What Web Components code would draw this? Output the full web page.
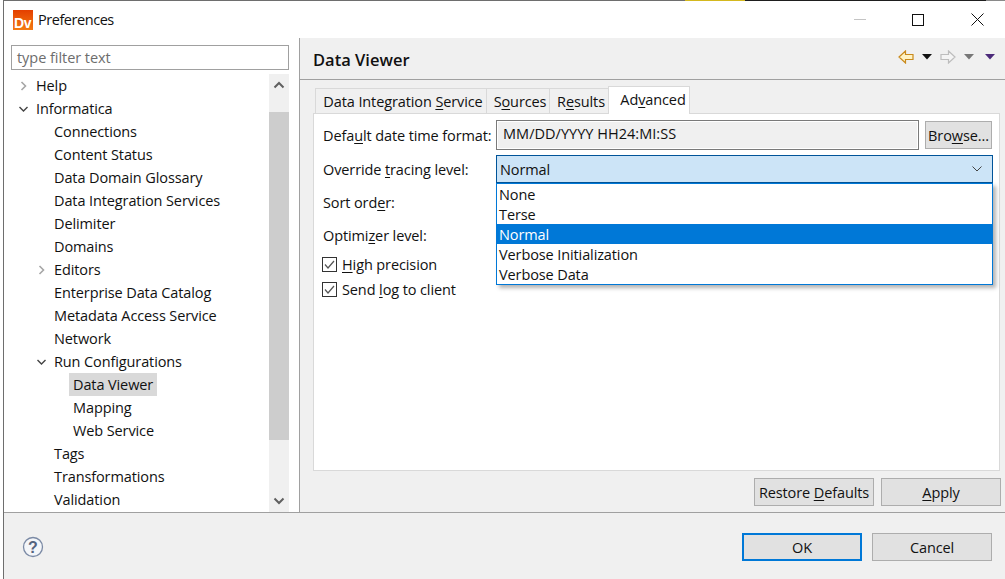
<!DOCTYPE html>
<html>
<head>
<meta charset="utf-8">
<title>Preferences</title>
<style>
  html, body { margin: 0; height: 100%; background: #fff; }
  body { overflow: hidden; }
</style>
</head>
<body>
<pref-window></pref-window>

<script>
const FONT = '"Open Sans", "Noto Sans", sans-serif';

customElements.define('pref-button', class extends HTMLElement {
  constructor() {
    super();
    this.attachShadow({ mode: 'open' });
    this.shadowRoot.innerHTML = `
      <style>
        :host {
          display: flex;
          align-items: center;
          justify-content: center;
          box-sizing: border-box;
          height: 28px;
          background: #e1e1e1;
          border: 1px solid #adadad;
          color: #111;
          font-size: 14.5px;
          letter-spacing: -.11px;
          white-space: nowrap;
        }
        :host([default]) { border: 2px solid #0078d7; }
      </style>
      <span><slot></slot></span>`;
  }
});

customElements.define('tree-row', class extends HTMLElement {
  constructor() {
    super();
    this.attachShadow({ mode: 'open' });
    this.shadowRoot.innerHTML = `
      <style>
        :host {
          display: flex;
          align-items: center;
          height: 23px;
          color: #111;
          font-size: 14.5px;
          letter-spacing: -.11px;
          white-space: nowrap;
        }
        .twist { flex: 0 0 15px; height: 12px; margin-left: 7px; }
        :host([level="1"]) .twist { margin-left: 25px; }
        :host([level="2"]) .twist { margin-left: 44px; }
        .label { padding: 0 4px; margin-left: -1px; height: 23px; line-height: 23px; }
        :host([selected]) .label { background: #d9d9d9; }
        svg { display: block; }
      </style>
      <div class="twist"></div>
      <div class="label"><slot></slot></div>`;
    const twist = this.shadowRoot.querySelector('.twist');
    const state = this.getAttribute('twist');
    if (state === 'closed') {
      twist.innerHTML = '<svg width="12" height="12"><path d="M3.5 2 7.5 6 3.5 10" fill="none" stroke="#a6a6a6" stroke-width="1.6"/></svg>';
    } else if (state === 'open') {
      twist.innerHTML = '<svg width="12" height="12"><path d="M1.5 4 5.5 8 9.5 4" fill="none" stroke="#444" stroke-width="1.4"/></svg>';
    }
  }
});

customElements.define('pref-tree', class extends HTMLElement {
  constructor() {
    super();
    this.attachShadow({ mode: 'open' });
    this.shadowRoot.innerHTML = `
      <style>
        :host {
          display: flex;
          flex: 1;
          min-height: 0;
          overflow: hidden;
        }
        .rows { flex: 1; overflow: hidden; }
        .bar {
          flex: 0 0 20px;
          display: flex;
          flex-direction: column;
          background: #f0f0f0;
        }
        .end { flex: 0 0 38px; display: flex; align-items: center; justify-content: center; }
        .up svg { margin-top: -16px; }
        .down { flex-basis: 72px; align-items: flex-end; padding-bottom: 7px; box-sizing: border-box; }
        .thumb { flex: 1; background: #cdcdcd; }
        svg { display: block; }
      </style>
      <div class="rows"><slot></slot></div>
      <div class="bar">
        <div class="end up"><svg width="12" height="8"><path d="M1.5 6.500 6 2 10.500 6.500" fill="none" stroke="#606060" stroke-width="2"/></svg></div>
        <div class="thumb"></div>
        <div class="end down"><svg width="12" height="8"><path d="M1.500 1.500 6 6 10.500 1.500" fill="none" stroke="#606060" stroke-width="2"/></svg></div>
      </div>`;
  }
});

customElements.define('pref-tabs', class extends HTMLElement {
  constructor() {
    super();
    this.attachShadow({ mode: 'open' });
    this.shadowRoot.innerHTML = `
      <style>
        :host {
          display: flex;
          flex: 0 0 27px;
          align-items: flex-end;
          height: 27px;
          margin-left: 2px;
          font-size: 14.5px;
          letter-spacing: -.11px;
          color: #111;
          position: relative;
          z-index: 1;
        }
        ::slotted(span) {
          display: block;
          box-sizing: border-box;
          height: 25px;
          line-height: 26px;
          padding-left: 4px;
          background: #f0f0f0;
          border: 1px solid #d9d9d9;
          border-bottom: 0;
          margin-right: -1px;
          text-align: center;
          white-space: nowrap;
        }
        ::slotted(span[active]) {
          height: 28px;
          line-height: 26px;
          padding-left: 8px;
          background: #fff;
          margin-bottom: -1px;
        }
      </style>
      <slot></slot>`;
  }
});

customElements.define('advanced-form', class extends HTMLElement {
  constructor() {
    super();
    this.attachShadow({ mode: 'open' });
    this.shadowRoot.innerHTML = `
      <style>
        :host {
          display: block;
          flex: 1;
          box-sizing: border-box;
          background: #fff;
          border: 1px solid #d9d9d9;
          margin-right: 5px;
          padding: 6px 0 0 8px;
          font-size: 14.5px;
          letter-spacing: -.11px;
          color: #111;
          position: relative;
        }
        u { text-underline-offset: 2px; }
        .row { display: flex; align-items: center; }
        .label { flex: 0 0 174px; box-sizing: border-box; padding-left: 1px; white-space: nowrap; }
        .date { height: 30px; }
        .value {
          flex: 0 0 423px;
          box-sizing: border-box;
          height: 30px;
          line-height: 25px;
          padding-left: 6px;
          letter-spacing: .03px;
          background: #f0f0f0;
          border: 1px solid #7a7a7a;
          outline: 1px solid #fff;
          outline-offset: -2px;
        }
        pref-button { width: 67px; height: 28px; margin-left: 6px; }
        .combo-row { height: 28px; margin-top: 5px; }
        .combo {
          flex: 0 0 497px;
          display: flex;
          align-items: center;
          justify-content: space-between;
          box-sizing: border-box;
          height: 28px;
          padding: 0 10px 0 3px;
          background: #cce4f7;
          border: 1px solid #005499;
        }
        .plain { height: 33px; }
        .sort { margin-top: 3px; }
        .check { height: 25px; gap: 5px; }
        .box {
          flex: 0 0 15px;
          height: 15px;
          box-sizing: border-box;
          border: 1px solid #333;
          background: #fff;
        }
        .box svg { display: block; }
        .list {
          position: absolute;
          left: 182px;
          top: 69px;
          width: 497px;
          box-sizing: border-box;
          background: #fff;
          border: 1px solid #0078d7;
          box-shadow: 3px 3px 4px rgba(0,0,0,.3);
          z-index: 2;
        }
        .list div { height: 20px; line-height: 22px; padding-left: 2px; }
        .list .on { background: #0078d7; color: #fff; }
      </style>
      <div class="row date">
        <div class="label">Defa<u>u</u>lt date time format:</div>
        <div class="value">MM/DD/YYYY HH24:MI:SS</div>
        <pref-button>Bro<u>w</u>se...</pref-button>
      </div>
      <div class="row combo-row">
        <div class="label">Override <u>t</u>racing level:</div>
        <div class="combo">
          <span>Normal</span>
          <svg width="10" height="6"><path d="M.5.5 5 5 9.500.5" fill="none" stroke="#444"/></svg>
        </div>
      </div>
      <div class="row plain sort"><div class="label">Sort ord<u>e</u>r:</div></div>
      <div class="row plain"><div class="label">Optimi<u>z</u>er level:</div></div>
      <div class="row check">
        <div class="box"><svg width="13" height="13"><path d="M2 6.500 5 10 11 3" fill="none" stroke="#555" stroke-width="1.200"/></svg></div>
        <div><u>H</u>igh precision</div>
      </div>
      <div class="row check">
        <div class="box"><svg width="13" height="13"><path d="M2 6.500 5 10 11 3" fill="none" stroke="#555" stroke-width="1.200"/></svg></div>
        <div>Send <u>l</u>og to client</div>
      </div>
      <div class="list">
        <div>None</div>
        <div>Terse</div>
        <div class="on">Normal</div>
        <div>Verbose Initialization</div>
        <div>Verbose Data</div>
      </div>`;
  }
});

customElements.define('pref-window', class extends HTMLElement {
  constructor() {
    super();
    this.attachShadow({ mode: 'open' });
    this.shadowRoot.innerHTML = `
      <style>
        :host {
          display: flex;
          flex-direction: column;
          box-sizing: border-box;
          height: 579px;
          width: 1002px;
          margin-left: 3px;
          border-left: 1px solid #808080;
          border-top: 1px solid;
          border-image: linear-gradient(90deg, #6e6e6e 681px, #d4b81e 681px, #d4b81e 741px, #1e1e1e 741px, #1e1e1e 982px, #8a8a8a 982px) 1;
          background: #f0f0f0;
          color: #111;
          font-family: ${FONT};
        }
        svg { display: block; }
        u { text-underline-offset: 2px; }
        .title {
          flex: 0 0 37px;
          display: flex;
          align-items: center;
          background: #fff;
          font-size: 14.5px;
          letter-spacing: -.45px;
        }
        .logo { margin: 0 5px 0 9px; }
        .name { flex: 1; margin-top: -1px; }
        .caps { display: flex; align-items: center; }
        .caps div { width: 58px; display: flex; justify-content: center; }
        .caps .max { margin-right: 2px; }
        .caps .close { width: 56px; }
        .main { flex: 1; display: flex; min-height: 0; background: #f0f0f0; }
        .left {
          flex: 0 0 296px;
          box-sizing: border-box;
          display: flex;
          flex-direction: column;
          background: #fff;
          border-right: 1px solid #a0a0a0;
          padding: 7px 10px 0 7px;
        }
        .filter {
          flex: 0 0 25px;
          box-sizing: border-box;
          line-height: 23px;
          padding-left: 5px;
          border: 1px solid #a0a0a0;
          color: #6d6d6d;
          font-size: 14.5px;
          letter-spacing: -.05px;
          margin-bottom: 4px;
        }
        .right { flex: 1; display: flex; flex-direction: column; min-width: 0; }
        .head {
          flex: 0 0 42px;
          box-sizing: border-box;
          display: flex;
          align-items: center;
          justify-content: space-between;
          border-bottom: 1px solid #a0a0a0;
          padding: 0 10px 0 13px;
        }
        .head b { font-size: 16.5px; font-weight: 600; color: #111; margin-top: 2px; }
        .nav { display: flex; align-items: center; margin-top: -3px; }
        .nav svg { margin-left: 8px; }
        .nav .far { margin-left: 11px; }
        .body { flex: 1; display: flex; flex-direction: column; padding: 6px 0 0 13px; min-height: 0; }
        .actions { flex: 0 0 41px; display: flex; justify-content: flex-end; gap: 7px; padding: 7px 4px 0 0; box-sizing: border-box; }
        .actions pref-button { width: 120px; }
        .foot {
          flex: 0 0 67px;
          box-sizing: border-box;
          display: flex;
          align-items: center;
          border-top: 1px solid #a0a0a0;
          padding: 2px 13px 0 18px;
        }
        .foot .help { flex: 1; }
        .foot pref-button { width: 120px; height: 28px; margin-left: 10px; }
      </style>
      <div class="title">
        <svg class="logo" width="20" height="20" viewBox="0 0 20 20">
          <defs><linearGradient id="g" x1="0" y1="0" x2="0" y2="1"><stop offset="0" stop-color="#e43f00"/><stop offset="1" stop-color="#f47a12"/></linearGradient></defs>
          <rect width="20" height="20" fill="url(#g)"/>
          <text x="1" y="18" font-family="Liberation Sans" font-size="14" font-weight="700" fill="#fff">Dv</text>
        </svg>
        <div class="name">Preferences</div>
        <div class="caps">
          <div><svg width="12" height="2"><rect width="12" height="1" fill="#c4c4c4"/></svg></div>
          <div class="max"><svg width="12" height="12"><rect x=".5" y=".5" width="11" height="11" fill="none" stroke="#111"/></svg></div>
          <div class="close"><svg width="13" height="13"><path d="M.5.5 12.500 12.500M12.500.5.5 12.500" stroke="#111" fill="none"/></svg></div>
        </div>
      </div>
      <div class="main">
        <div class="left">
          <div class="filter">type filter text</div>
          <pref-tree>
            <tree-row twist="closed">Help</tree-row>
            <tree-row twist="open">Informatica</tree-row>
            <tree-row level="1">Connections</tree-row>
            <tree-row level="1">Content Status</tree-row>
            <tree-row level="1">Data Domain Glossary</tree-row>
            <tree-row level="1">Data Integration Services</tree-row>
            <tree-row level="1">Delimiter</tree-row>
            <tree-row level="1">Domains</tree-row>
            <tree-row level="1" twist="closed">Editors</tree-row>
            <tree-row level="1">Enterprise Data Catalog</tree-row>
            <tree-row level="1">Metadata Access Service</tree-row>
            <tree-row level="1">Network</tree-row>
            <tree-row level="1" twist="open">Run Configurations</tree-row>
            <tree-row level="2" selected>Data Viewer</tree-row>
            <tree-row level="2">Mapping</tree-row>
            <tree-row level="2">Web Service</tree-row>
            <tree-row level="1">Tags</tree-row>
            <tree-row level="1">Transformations</tree-row>
            <tree-row level="1">Validation</tree-row>
          </pref-tree>
        </div>
        <div class="right">
          <div class="head">
            <b>Data Viewer</b>
            <div class="nav">
              <svg width="16" height="14"><path d="M7.500 1 1 7 7.500 13V9.500H15V4.500H7.500Z" fill="#fff3c4" stroke="#c98a1c" stroke-width="1.200"/></svg>
              <svg width="10" height="6"><path d="M0 0H10L5 5.500Z" fill="#111"/></svg>
              <svg width="16" height="14"><path d="M8.500 1 15 7 8.500 13V9.500H1V4.500H8.500Z" fill="#f4f4f4" stroke="#bdbdbd" stroke-width="1.200"/></svg>
              <svg width="10" height="6"><path d="M0 0H10L5 5.500Z" fill="#777"/></svg>
              <svg class="far" width="10" height="6"><path d="M0 0H10L5 5.500Z" fill="#4b2a7a"/></svg>
            </div>
          </div>
          <div class="body">
            <pref-tabs>
              <span style="width:172px">Data Integration <u>S</u>ervice</span>
              <span style="width:64px">S<u>o</u>urces</span>
              <span style="width:60px">R<u>e</u>sults</span>
              <span active style="width:82px">Ad<u>v</u>anced</span>
            </pref-tabs>
            <advanced-form></advanced-form>
            <div class="actions">
              <pref-button>Restore <u>D</u>efaults</pref-button>
              <pref-button><u>A</u>pply</pref-button>
            </div>
          </div>
        </div>
      </div>
      <div class="foot">
        <div class="help">
          <svg width="22" height="22" viewBox="0 0 22 22">
            <circle cx="11" cy="11" r="9.500" fill="#f4f6f9" stroke="#7b8aa5" stroke-width="1.300"/>
            <text x="11" y="16.500" text-anchor="middle" font-family="Liberation Sans" font-size="16" font-weight="700" fill="#55647f">?</text>
          </svg>
        </div>
        <pref-button default>OK</pref-button>
        <pref-button>Cancel</pref-button>
      </div>`;
  }
});
</script>
</body>
</html>
